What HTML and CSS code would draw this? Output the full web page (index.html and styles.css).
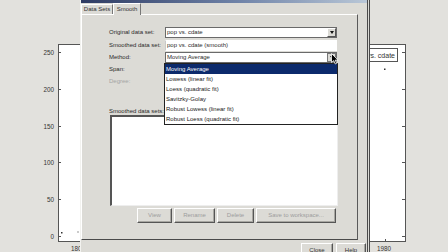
FILE: index.html
```html
<!DOCTYPE html>
<html lang="en">
<head>
  <meta charset="UTF-8">
  <title>Curve Fitting Tool - Data</title>
  <link rel="stylesheet" href="styles.css">
</head>
<body>
  <svg class="figure" width="448" height="252" viewBox="0 0 448 252">
    <rect x="58.5" y="44.5" width="347" height="197" fill="#fff" stroke="#555"/>
    <g stroke="#555">
      <line x1="58" y1="52.5" x2="61" y2="52.5"/>
      <line x1="58" y1="89.5" x2="61" y2="89.5"/>
      <line x1="58" y1="126.5" x2="61" y2="126.5"/>
      <line x1="58" y1="162.5" x2="61" y2="162.5"/>
      <line x1="58" y1="199.5" x2="61" y2="199.5"/>
      <line x1="58" y1="236.5" x2="61" y2="236.5"/>
      <line x1="405" y1="52.5" x2="402" y2="52.5"/>
      <line x1="405" y1="89.5" x2="402" y2="89.5"/>
      <line x1="405" y1="126.5" x2="402" y2="126.5"/>
      <line x1="405" y1="162.5" x2="402" y2="162.5"/>
      <line x1="405" y1="199.5" x2="402" y2="199.5"/>
      <line x1="405" y1="236.5" x2="402" y2="236.5"/>
      <line x1="385.5" y1="242" x2="385.5" y2="239"/>
    </g>
    <g class="tick-labels" text-anchor="end">
      <text x="54" y="54.5">250</text>
      <text x="54" y="91.5">200</text>
      <text x="54" y="128.5">150</text>
      <text x="54" y="164.5">100</text>
      <text x="54" y="201.5">50</text>
      <text x="54" y="238.5">0</text>
    </g>
    <g class="tick-labels">
      <text x="71" y="251">1800</text>
      <text x="377" y="251">1980</text>
    </g>
    <g fill="#333">
      <rect x="61" y="232" width="1.5" height="1.5"/>
      <rect x="77.5" y="231.5" width="1" height="1"/>
      <rect x="384" y="68.5" width="1.5" height="1.5"/>
    </g>
    <rect x="330.5" y="48.5" width="67" height="13" fill="#fff" stroke="#555"/>
    <text class="legend-text" x="395" y="58" text-anchor="end">pop vs. cdate</text>
  </svg>

  <div class="dialog">
    <div class="title-bar"></div>
    <div class="tabs">
      <div class="tab">Data Sets</div>
      <div class="tab active">Smooth</div>
    </div>
    <div class="panel">
      <div class="form">
        <div class="form-row first">
          <label>Original data set:</label>
          <div class="field combo">pop vs. cdate<span class="drop-btn"></span></div>
        </div>
        <div class="form-row">
          <label>Smoothed data set:</label>
          <div class="field edit">pop vs. cdate (smooth)</div>
        </div>
        <div class="form-row">
          <label>Method:</label>
          <div class="field combo">Moving Average<span class="drop-btn pressed"></span></div>
        </div>
        <div class="form-row">
          <label>Span:</label>
        </div>
        <div class="form-row">
          <label class="disabled">Degree:</label>
        </div>
      </div>
      <div class="list-label">Smoothed data sets:</div>
      <div class="listbox"></div>
      <div class="btn-row">
        <div class="btn off w-view">View</div>
        <div class="btn off w-rename">Rename</div>
        <div class="btn off w-delete">Delete</div>
        <div class="btn off w-save">Save to workspace...</div>
      </div>
    </div>
    <div class="footer">
      <div class="btn w-close">Close</div>
      <div class="btn w-help">Help</div>
    </div>

    <div class="dropdown">
      <div class="item selected">Moving Average</div>
      <div class="item">Lowess (linear fit)</div>
      <div class="item">Loess (quadratic fit)</div>
      <div class="item">Savitzky-Golay</div>
      <div class="item">Robust Lowess (linear fit)</div>
      <div class="item">Robust Loess (quadratic fit)</div>
    </div>
  </div>

  <svg class="cursor" width="8" height="12" viewBox="0 0 8 12">
    <path d="M0.5 0.5 L0.5 9.5 L2.7 7.6 L4.3 11 L5.7 10.3 L4.2 7.1 L7 7.1 Z" fill="#000" stroke="#fff" stroke-width="0.8"/>
  </svg>
</body>
</html>
```

FILE: styles.css
```css
body { margin: 0; width: 448px; height: 252px; overflow: hidden; position: relative; background: #e2e1dd; font-family: 'Liberation Sans', Arial, sans-serif; font-size: 6px; color: #2a2a2a; }
.figure { position: absolute; left: 0; top: 0; }
.tick-labels text { font-family: 'Liberation Sans', Arial, sans-serif; font-size: 6.3px; fill: #333; }
.legend-text { font-family: 'Liberation Sans', Arial, sans-serif; font-size: 7px; fill: #333; }

.dialog {
  position: absolute;
  left: 80px;
  top: 0;
  width: 286px;
  height: 252px;
  overflow: hidden;
  background: #dcdbd6;
  border-left: 1px solid #f2f2ef;
  border-right: 3px double #4a4a4a;
  display: flex;
  flex-direction: column;
}
.dialog > div { flex-shrink: 0; }
.title-bar { height: 3px; background: linear-gradient(to right, #2e3b63, #6f83a8 55%, #b9c7d7); }

.tabs { display: flex; align-items: flex-end; height: 11px; }
.tab {
  box-sizing: border-box;
  width: 32px;
  height: 10px;
  line-height: 9px;
  text-align: center;
  border: 1px solid #fff;
  border-right-color: #777;
  border-bottom: none;
  color: #333;
}
.tab.active { width: 28px; height: 12px; line-height: 10px; margin-bottom: -1px; background: #dcdbd6; position: relative; z-index: 1; }

.panel {
  box-sizing: border-box;
  width: 277px;
  height: 226px;
  border: 1px solid #fff;
  border-right-color: #5a5a5a;
  border-bottom-color: #4a4a4a;
  padding: 12px 0 0 27px;
}
.form-row { display: flex; align-items: flex-start; height: 12px; }
.form-row.first { margin-bottom: 1px; }
.form-row label { width: 56px; line-height: 11px; }
.form-row label.disabled { color: #a5a5a5; }
.field {
  box-sizing: border-box;
  width: 172px;
  height: 11px;
  line-height: 9px;
  padding-left: 1px;
  background: #fff;
  position: relative;
}
.field.combo { border: 1px solid #6a6a6a; }
.field.edit { border: 1px solid #fff; border-left-color: #c9c9c9; }
.drop-btn {
  position: absolute;
  right: 0;
  top: 0;
  box-sizing: border-box;
  width: 9px;
  height: 9px;
  background: #dcdbd6;
  border: 1px solid #fff;
  border-right-color: #555;
  border-bottom-color: #555;
  display: flex;
  align-items: center;
  justify-content: center;
}
.drop-btn::after { content: ""; border-top: 3px solid #111; border-left: 2.5px solid transparent; border-right: 2.5px solid transparent; }
.drop-btn.pressed { border-color: #777; }

.list-label { margin-top: 19px; line-height: 8px; }
.listbox {
  box-sizing: border-box;
  margin-left: 1px;
  width: 228px;
  height: 91px;
  background: #fff;
  border-top: 2px solid #555;
  border-left: 2px solid #555;
  border-right: 1px solid #eee;
  border-bottom: 1px solid #eee;
}
.btn-row { display: flex; gap: 2px; margin: 2px 0 0 28px; }
.btn {
  box-sizing: border-box;
  height: 15px;
  line-height: 13px;
  text-align: center;
  background: #dcdbd6;
  border: 1px solid #fff;
  border-right-color: #555;
  border-bottom-color: #555;
  box-shadow: inset -1px -1px 0 #a8a7a2;
  color: #333;
}
.btn.off { color: #9d9d9d; }
.w-view { width: 35px; }
.w-rename { width: 41px; }
.w-delete { width: 37px; }
.w-save { width: 80px; }

.footer { display: flex; justify-content: flex-end; gap: 3px; padding: 3px 1px 0 0; }
.w-close { width: 32px; }
.w-help { width: 30px; }

.dropdown {
  position: absolute;
  left: 83px;
  top: 63px;
  box-sizing: border-box;
  width: 174px;
  height: 62px;
  background: #fff;
  border: 1px solid #222;
}
.item { height: 10px; line-height: 10px; padding-left: 1px; color: #222; }
.item.selected { background: #0c2a6c; color: #fff; }

.cursor { position: absolute; left: 331px; top: 53px; }
```
